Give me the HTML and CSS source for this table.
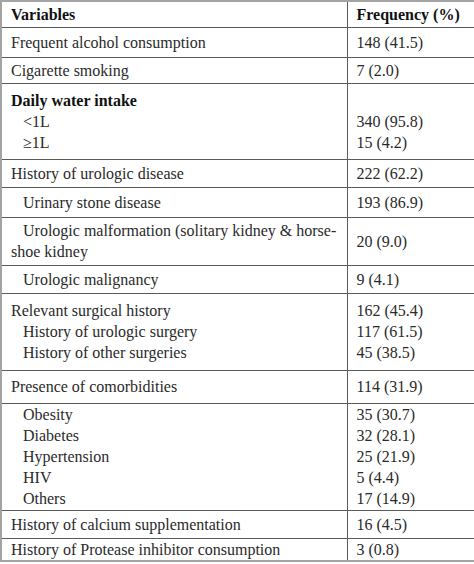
FILE: index.html
```html
<!DOCTYPE html>
<html>
<head>
<meta charset="utf-8">
<link rel="stylesheet" href="styles.css">
</head>
<body>
<table class="tbl">
  <colgroup><col class="c1"><col class="c2"></colgroup>
  <tr class="r-head"><th>Variables</th><th>Frequency (%)</th></tr>
  <tr class="h30"><td>Frequent alcohol consumption</td><td>148 (41.5)</td></tr>
  <tr class="h26"><td>Cigarette smoking</td><td>7 (2.0)</td></tr>
  <tr class="h76"><td><div class="line b">Daily water intake</div><div class="line ind">&lt;1L</div><div class="line ind">&ge;1L</div></td><td><div class="line">&nbsp;</div><div class="line">340 (95.8)</div><div class="line">15 (4.2)</div></td></tr>
  <tr class="h28"><td>History of urologic disease</td><td>222 (62.2)</td></tr>
  <tr class="h30"><td class="ind">Urinary stone disease</td><td>193 (86.9)</td></tr>
  <tr class="h48"><td><div class="line tind">Urologic malformation (solitary kidney &amp; horse-</div><div class="line">shoe kidney</div></td><td>20 (9.0)</td></tr>
  <tr class="h28"><td class="ind">Urologic malignancy</td><td>9 (4.1)</td></tr>
  <tr class="h77"><td><div class="line">Relevant surgical history</div><div class="line ind">History of urologic surgery</div><div class="line ind">History of other surgeries</div></td><td><div class="line">162 (45.4)</div><div class="line">117 (61.5)</div><div class="line">45 (38.5)</div></td></tr>
  <tr class="h33"><td>Presence of comorbidities</td><td>114 (31.9)</td></tr>
  <tr class="h107"><td><div class="line ind">Obesity</div><div class="line ind">Diabetes</div><div class="line ind">Hypertension</div><div class="line ind">HIV</div><div class="line ind">Others</div></td><td><div class="line">35 (30.7)</div><div class="line">32 (28.1)</div><div class="line">25 (21.9)</div><div class="line">5 (4.4)</div><div class="line">17 (14.9)</div></td></tr>
  <tr class="h28"><td>History of calcium supplementation</td><td>16 (4.5)</td></tr>
  <tr class="h23"><td>History of Protease inhibitor consumption</td><td>3 (0.8)</td></tr>
</table>
</body>
</html>
```

FILE: styles.css
```css
html, body {
  margin: 0;
  padding: 0;
  background: #ffffff;
}
.tbl {
  border-collapse: collapse;
  width: 474px;
  table-layout: fixed;
  font-family: "Liberation Serif", "Times New Roman", serif;
  font-size: 16px;
  color: #2a2a2a;
  border: 2px solid #a3a3a3;
}
.c1 { width: 346px; }
.c2 { width: 128px; }
.tbl th, .tbl td {
  border: 1px solid #5a5a5a;
  padding: 0 0 0 9px;
  text-align: left;
  vertical-align: middle;
  line-height: 21px;
  white-space: nowrap;
}
.tbl tr > :first-child { border-left: 2px solid #a3a3a3; }
.tbl tr > :last-child { border-right: 2px solid #a3a3a3; padding-left: 9px; }
.tbl th {
  font-weight: bold;
  color: #111;
}
.r-head th { border-top: 2px solid #a3a3a3; }
.tbl tr:last-child td { border-bottom: 2px solid #a3a3a3; }
.r-head { height: 26px; }
.h23 { height: 23px; }
.h26 { height: 26px; }
.h28 { height: 28px; }
.h30 { height: 30px; }
.h33 { height: 33px; }
.h48 { height: 48px; }
.h76 { height: 76px; }
.h77 { height: 77px; }
.h107 { height: 107px; }
.line { line-height: 21px; }
.b { font-weight: bold; color: #111; }
.ind { padding-left: 12px; }
td.ind { padding-left: 21px; }
.tind { text-indent: 12px; }
```
